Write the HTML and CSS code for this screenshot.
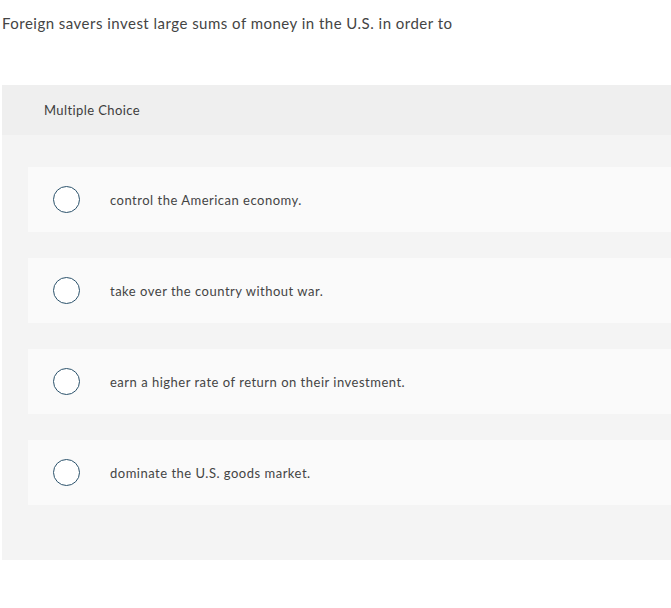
FILE: index.html
```html
<!DOCTYPE html>
<html lang="en">
<head>
<meta charset="utf-8">
<title>Multiple Choice</title>
<link rel="stylesheet" href="styles.css">
</head>
<body>
<div class="page">
  <p class="question">Foreign savers invest large sums of money in the U.S. in order to</p>
  <section class="panel">
    <div class="panel-header">Multiple Choice</div>
    <div class="panel-body">
      <label class="option"><span class="radio"></span><span class="option-text">control the American economy.</span></label>
      <label class="option"><span class="radio"></span><span class="option-text">take over the country without war.</span></label>
      <label class="option"><span class="radio"></span><span class="option-text">earn a higher rate of return on their investment.</span></label>
      <label class="option"><span class="radio"></span><span class="option-text">dominate the U.S. goods market.</span></label>
    </div>
  </section>
</div>
</body>
</html>
```
FILE: styles.css
```css
html, body {
  margin: 0;
  padding: 0;
  background: #ffffff;
}
body {
  font-family: "Lato", "Open Sans", sans-serif;
  color: #444444;
  width: 671px;
  overflow: hidden;
}
.page {
  padding-left: 2px;
}
.question {
  margin: 0;
  padding-top: 13px;
  height: 85px;
  box-sizing: border-box;
  font-size: 15px;
  line-height: 20px;
  letter-spacing: 0.48px;
  color: #444444;
}
.panel {
  background: #f4f4f4;
}
.panel-header {
  background: #efefef;
  height: 50px;
  display: flex;
  align-items: center;
  padding-left: 42px;
  font-size: 13px;
  letter-spacing: 0.4px;
  color: #3d3d3d;
}
.panel-body {
  display: flex;
  flex-direction: column;
  gap: 26px;
  padding: 32px 0 55px 26px;
}
.option {
  display: flex;
  align-items: center;
  height: 65px;
  background: #fafafa;
}
.radio {
  width: 25px;
  height: 25px;
  border: 1.5px solid #2b526b;
  border-radius: 50%;
  margin-left: 25px;
  flex: none;
  background: #ffffff;
}
.option-text {
  margin-left: 30px;
  font-size: 13px;
  letter-spacing: 0.5px;
  color: #444444;
}
```
